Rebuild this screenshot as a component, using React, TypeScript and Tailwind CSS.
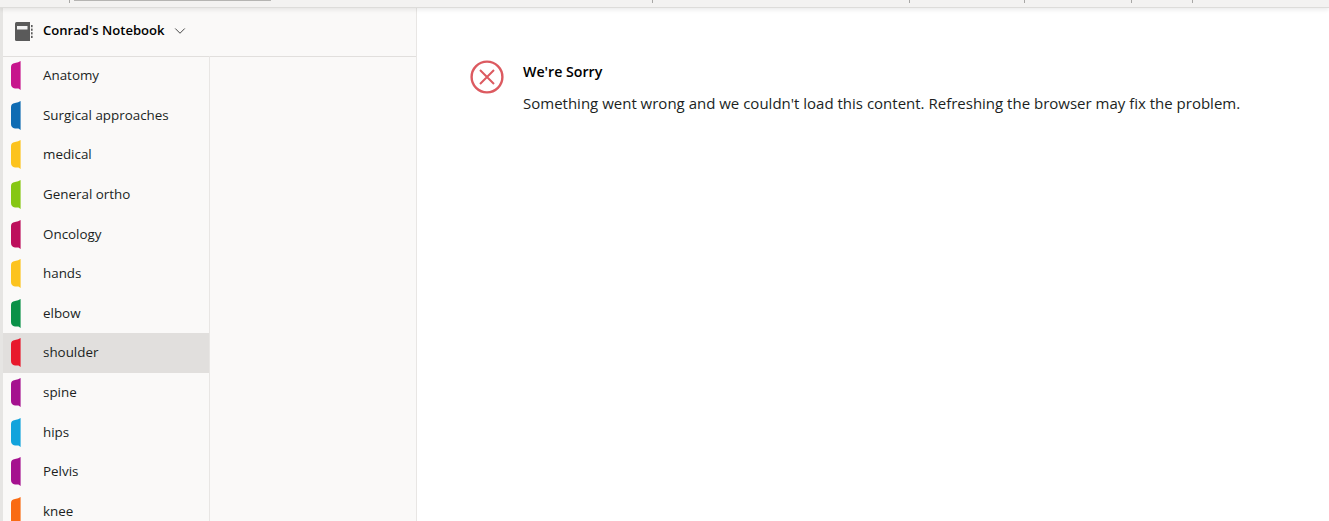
import React from 'react';
import { ChevronDown } from 'lucide-react';

interface Section {
  name: string;
  color: string;
  active?: boolean;
}

const sections: Section[] = [
  { name: 'Anatomy', color: '#c7158c' },
  { name: 'Surgical approaches', color: '#0f6cb3' },
  { name: 'medical', color: '#fcc31e' },
  { name: 'General ortho', color: '#86c714' },
  { name: 'Oncology', color: '#bd0f5c' },
  { name: 'hands', color: '#fcc31e' },
  { name: 'elbow', color: '#0a9148' },
  { name: 'shoulder', color: '#e8192c', active: true },
  { name: 'spine', color: '#a5118f' },
  { name: 'hips', color: '#12a3dc' },
  { name: 'Pelvis', color: '#a5118f' },
  { name: 'knee', color: '#f96b13' },
];

const rulerTicks = [69, 652, 909, 1024, 1131, 1192];

const SectionTab = ({ color }: { color: string }) => (
  <svg width="10" height="29" viewBox="0 0 10 29" className="shrink-0">
    <path d="M9.6 0V29L7.5 27.4H4Q0 27 0 23V6Q0 2.6 4 2Q7.5 1.4 9.6 0Z" fill={color} />
  </svg>
);

const NotebookIcon = () => (
  <svg width="18" height="19" viewBox="0 0 18 19" className="shrink-0">
    <path d="M0 1.5Q0 0 1.5 0H15V19H1.5Q0 19 0 17.5Z" fill="#5a5a5a" />
    <rect x="2" y="4" width="10.5" height="3.5" fill="#f2f2f2" />
    <rect x="16" y="3" width="1.6" height="2.2" fill="#5a5a5a" />
    <rect x="16" y="6.6" width="1.6" height="2.2" fill="#5a5a5a" />
    <rect x="16" y="10.2" width="1.6" height="2.2" fill="#5a5a5a" />
    <rect x="16" y="13.8" width="1.6" height="2.2" fill="#5a5a5a" />
  </svg>
);

const ErrorIcon = () => (
  <svg width="34" height="34" viewBox="0 0 34 34" className="shrink-0">
    <circle cx="17" cy="17" r="15.4" fill="none" stroke="#dc5a60" strokeWidth="2.4" />
    <path d="M10 10L24 24M24 10L10 24" stroke="#dc5a60" strokeWidth="2" />
  </svg>
);

export default function App() {
  return (
    <div className="flex h-[521px] w-[1329px] flex-col overflow-hidden bg-white font-['Open_Sans','Noto_Sans',sans-serif] text-black">
      <div className="relative h-[8px] shrink-0 border-b border-[#dddcda] bg-[#f3f2f1] shadow-[0_2px_4px_rgba(0,0,0,0.08)]">
        <div className="absolute left-[74px] top-0 h-px w-[197px] bg-[#b5b4b2]" />
        {rulerTicks.map((x) => (
          <div key={x} className="absolute top-0 h-[3px] w-px bg-[#a8a7a5]" style={{ left: x }} />
        ))}
      </div>
      <div className="flex min-h-0 flex-1">
        <aside className="flex w-[417px] shrink-0 flex-col border-r border-l-[3px] border-r-[#e8e6e4] border-l-[#e6e5e3] bg-[#faf9f8]">
          <header className="flex h-[49px] shrink-0 items-center border-b border-[#e1dfdd] pb-[2px] pl-[12px]">
            <NotebookIcon />
            <span className="ml-[10px] text-[13.1px] font-semibold">Conrad's Notebook</span>
            <ChevronDown size={18} strokeWidth={1.2} className="ml-[6px] text-[#333333]" />
          </header>
          <div className="flex min-h-0 flex-1">
            <nav className="-mt-px w-[207px] shrink-0 border-r border-[#e8e6e4]">
              {sections.map((section) => (
                <div
                  key={section.name}
                  className={`flex h-[39.6px] items-center pl-[8px] ${section.active ? 'bg-[#e1dfdd]' : ''}`}
                >
                  <SectionTab color={section.color} />
                  <span className="mb-px ml-[22px] text-[13.4px] text-[#201f1e]">{section.name}</span>
                </div>
              ))}
            </nav>
          </div>
        </aside>
        <main className="flex items-start gap-[19px] pl-[53px] pt-[52px]">
          <ErrorIcon />
          <div className="pt-[2px]">
            <h1 className="text-[14.2px] leading-[20px] font-semibold">We're Sorry</h1>
            <p className="mt-[11px] text-[15px] leading-[20px] text-[#201f1e]">
              Something went wrong and we couldn't load this content. Refreshing the browser may fix the problem.
            </p>
          </div>
        </main>
      </div>
    </div>
  );
}
